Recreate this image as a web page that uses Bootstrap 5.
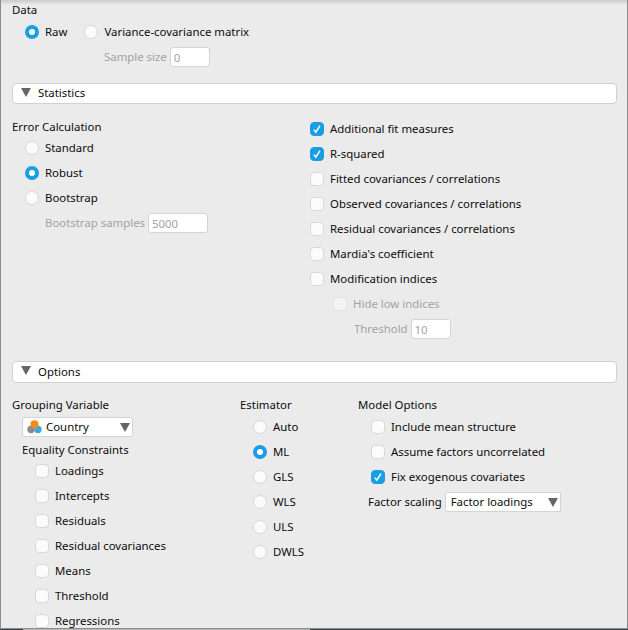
<!DOCTYPE html>
<html lang="en">
<head>
<meta charset="utf-8">
<title>SEM analysis options</title>
<link rel="stylesheet" href="https://cdn.jsdelivr.net/npm/bootstrap@5.3.0/dist/css/bootstrap.min.css">
<style>
html,body{height:630px;overflow:hidden}
body{background:#ebebeb;color:#0c0c0c;font:11.4px/16px "Noto Sans",sans-serif}
.sheet{height:629px;border:solid #8c8c8c;border-width:0 1px 1px 1px;background:linear-gradient(#c9c9c9,#ebebeb 5px);padding:0 0 0 11px;overflow:hidden}
.edge{height:1px}
.edge-a{width:23px;background:#3c4548}
.edge-b{width:287px;background:#b8b8b8}
.edge-c{background:#3c4548}
.heading{height:20px;display:flex;align-items:center;margin:0}
.heading-tight{height:19px}
.optrow{height:25px;padding-bottom:1px;display:flex;align-items:center;white-space:nowrap}
.dim{color:#a3a3a3}
.opt{display:flex;align-items:center;gap:6px;margin:0}
.opt .form-check-input{width:14px;height:14px;margin:0;flex:none;background-color:#fbfbfb;border:1px solid #d8d8d8;box-shadow:none;opacity:1}
.opt input[type=checkbox]{border-radius:4px}
.opt input[type=radio]:checked{background-color:#fff;background-image:none;border:4px solid #1a9ee2}
.opt input[type=checkbox]:checked{background-color:#1a9ee2;border-color:#1a9ee2;background-size:14px;background-position:center;background-image:url("data:image/svg+xml,%3Csvg xmlns='http://www.w3.org/2000/svg' viewBox='0 0 14 14'%3E%3Cpath d='M3.9 7.6l1.9 2.6L10 3.6' fill='none' stroke='%23fff' stroke-width='1.5'/%3E%3C/svg%3E")}
.opt input:disabled{border-color:#e4e4e4;background-color:#f4f4f4}
.field{flex:none;height:20px;padding:0 3px;font:11.4px "Noto Sans",sans-serif;color:#a3a3a3;background:#fff;border:1px solid #d4d4d4;border-radius:3px;min-height:0;box-shadow:none}
.field:disabled{background:#fff;color:#a3a3a3;opacity:1}
.w-40{width:40px}
.w-60{width:60px}
.bar{height:21px;background:#fff;border:1px solid #d0d0d0;border-radius:4px;display:flex;align-items:center;gap:7px;padding:0 0 1px 8px;width:605px}
.bar-tall{height:22px}
.tri{flex:none;display:block}
.bar .tri{margin-top:-2px}
.picker{height:20px;background:#fff;border:1px solid #d4d4d4;border-radius:2px;display:flex;align-items:center;justify-content:space-between;padding:0 2px 0 5px}
.w-country{width:111px;margin:2px 0 3px 10px;padding-left:4px}
.w-scale{width:116px}
.ind-10{padding-left:10px}
.ind-13{padding-left:13px}
.ind-23{padding-left:23px}
.ind-33{padding-left:33px}
.ind-44{padding-left:44px}
.ind-92{padding-left:92px}
.gap-raw{margin-left:17px}
.gap-lbl{gap:3px}
.block-first{margin-top:13px}
.block-next{margin-top:13px}
.block-opts{margin-top:12px}
.block-wide{margin-top:19px}
.col-error{width:298px}
.col-group{width:228px}
.col-est{width:118px}
</style>
</head>
<body>
<div class="sheet">
  <div class="heading">Data</div>
  <div class="optrow ind-13">
    <label class="opt"><input class="form-check-input" type="radio" name="d" checked>Raw</label>
    <label class="opt gap-raw"><input class="form-check-input" type="radio" name="d">Variance-covariance matrix</label>
  </div>
  <div class="optrow dim gap-lbl ind-92">Sample size <input class="form-control field w-40" disabled value="0"></div>

  <div class="bar block-first"><svg class="tri" width="10" height="9" viewBox="0 0 10 9"><path d="M0 0h10L5 9z" fill="#666"/></svg>Statistics</div>

  <div class="d-flex block-next">
    <div class="col-error">
      <div class="heading heading-tight">Error Calculation</div>
      <div class="optrow ind-13"><label class="opt"><input class="form-check-input" type="radio" name="e">Standard</label></div>
      <div class="optrow ind-13"><label class="opt"><input class="form-check-input" type="radio" name="e" checked>Robust</label></div>
      <div class="optrow ind-13"><label class="opt"><input class="form-check-input" type="radio" name="e">Bootstrap</label></div>
      <div class="optrow dim gap-lbl ind-33">Bootstrap samples <input class="form-control field w-60" disabled value="5000"></div>
    </div>
    <div>
      <div class="optrow"><label class="opt"><input class="form-check-input" type="checkbox" checked>Additional fit measures</label></div>
      <div class="optrow"><label class="opt"><input class="form-check-input" type="checkbox" checked>R-squared</label></div>
      <div class="optrow"><label class="opt"><input class="form-check-input" type="checkbox">Fitted covariances / correlations</label></div>
      <div class="optrow"><label class="opt"><input class="form-check-input" type="checkbox">Observed covariances / correlations</label></div>
      <div class="optrow"><label class="opt"><input class="form-check-input" type="checkbox">Residual covariances / correlations</label></div>
      <div class="optrow"><label class="opt"><input class="form-check-input" type="checkbox">Mardia's coefficient</label></div>
      <div class="optrow"><label class="opt"><input class="form-check-input" type="checkbox">Modification indices</label></div>
      <div class="optrow ind-23 dim"><label class="opt"><input class="form-check-input" type="checkbox" disabled>Hide low indices</label></div>
      <div class="optrow ind-44 dim gap-lbl">Threshold <input class="form-control field w-40" disabled value="10"></div>
    </div>
  </div>

  <div class="bar bar-tall block-wide"><svg class="tri" width="10" height="9" viewBox="0 0 10 9"><path d="M0 0h10L5 9z" fill="#666"/></svg>Options</div>

  <div class="d-flex block-opts">
    <div class="col-group">
      <div class="heading">Grouping Variable</div>
      <div class="picker w-country">
        <span class="d-flex align-items-center gap-1"><svg width="15" height="14" viewBox="0 0 15 14"><circle cx="4" cy="9.5" r="3.7" fill="#8a8a8a"/><circle cx="11" cy="9.5" r="3.7" fill="#3fa9dc"/><circle cx="7.5" cy="4.3" r="4" fill="#f28a1c"/></svg>Country</span>
        <svg class="tri" width="10" height="9" viewBox="0 0 10 9"><path d="M0 0h10L5 9z" fill="#666"/></svg>
      </div>
      <div class="heading heading-tight ind-10">Equality Constraints</div>
      <div class="optrow ind-23"><label class="opt"><input class="form-check-input" type="checkbox">Loadings</label></div>
      <div class="optrow ind-23"><label class="opt"><input class="form-check-input" type="checkbox">Intercepts</label></div>
      <div class="optrow ind-23"><label class="opt"><input class="form-check-input" type="checkbox">Residuals</label></div>
      <div class="optrow ind-23"><label class="opt"><input class="form-check-input" type="checkbox">Residual covariances</label></div>
      <div class="optrow ind-23"><label class="opt"><input class="form-check-input" type="checkbox">Means</label></div>
      <div class="optrow ind-23"><label class="opt"><input class="form-check-input" type="checkbox">Threshold</label></div>
      <div class="optrow ind-23"><label class="opt"><input class="form-check-input" type="checkbox">Regressions</label></div>
    </div>
    <div class="col-est">
      <div class="heading">Estimator</div>
      <div class="optrow ind-13"><label class="opt"><input class="form-check-input" type="radio" name="m">Auto</label></div>
      <div class="optrow ind-13"><label class="opt"><input class="form-check-input" type="radio" name="m" checked>ML</label></div>
      <div class="optrow ind-13"><label class="opt"><input class="form-check-input" type="radio" name="m">GLS</label></div>
      <div class="optrow ind-13"><label class="opt"><input class="form-check-input" type="radio" name="m">WLS</label></div>
      <div class="optrow ind-13"><label class="opt"><input class="form-check-input" type="radio" name="m">ULS</label></div>
      <div class="optrow ind-13"><label class="opt"><input class="form-check-input" type="radio" name="m">DWLS</label></div>
    </div>
    <div>
      <div class="heading">Model Options</div>
      <div class="optrow ind-13"><label class="opt"><input class="form-check-input" type="checkbox">Include mean structure</label></div>
      <div class="optrow ind-13"><label class="opt"><input class="form-check-input" type="checkbox">Assume factors uncorrelated</label></div>
      <div class="optrow ind-13"><label class="opt"><input class="form-check-input" type="checkbox" checked>Fix exogenous covariates</label></div>
      <div class="optrow ind-10 gap-lbl">Factor scaling
        <div class="picker w-scale"><span>Factor loadings</span><svg class="tri" width="10" height="9" viewBox="0 0 10 9"><path d="M0 0h10L5 9z" fill="#666"/></svg></div>
      </div>
    </div>
  </div>
</div>
<div class="d-flex edge"><div class="edge-a"></div><div class="edge-b"></div><div class="edge-c flex-grow-1"></div></div>
</body>
</html>
